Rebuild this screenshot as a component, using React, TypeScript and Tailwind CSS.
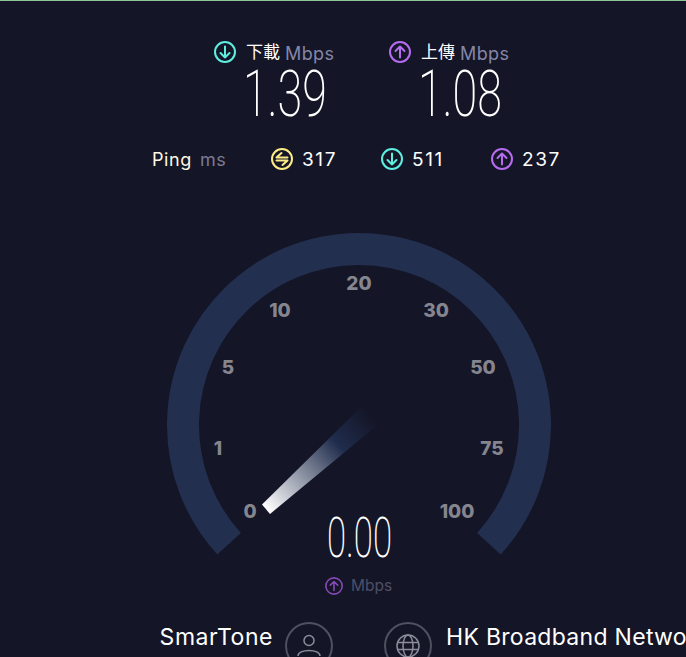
const sans = "font-['Inter','Noto_Sans_CJK_TC',sans-serif]";

function DownIcon({ className }: { className: string }) {
  return (
    <svg viewBox="0 0 22 22" fill="none" stroke="currentColor" strokeWidth="2" strokeLinecap="round" strokeLinejoin="round" className={className}>
      <circle cx="11" cy="11" r="10" />
      <path d="M11 5.500v11M6.500 12l4.500 4.500 4.500-4.500" />
    </svg>
  );
}

function UpIcon({ className }: { className: string }) {
  return (
    <svg viewBox="0 0 22 22" fill="none" stroke="currentColor" strokeWidth="2" strokeLinecap="round" strokeLinejoin="round" className={className}>
      <circle cx="11" cy="11" r="10" />
      <path d="M11 16.500v-11M6.500 10l4.500-4.500 4.500 4.500" />
    </svg>
  );
}

function PingIcon({ className }: { className: string }) {
  return (
    <svg viewBox="0 0 22 22" fill="none" stroke="currentColor" strokeWidth="2" strokeLinecap="round" strokeLinejoin="round" className={className}>
      <circle cx="11" cy="11" r="10" />
      <path d="M16.500 9.500h-11l5-4.500M5.500 12.500h11l-5 4.500" />
    </svg>
  );
}

function BigNumber({ value, className }: { value: string; className: string }) {
  return <span className={`inline-block font-['Roboto',sans-serif] font-extralight text-white origin-center ${className}`}>{value}</span>;
}

function Rate({ icon, label, value }: { icon: React.ReactNode; label: string; value: string }) {
  return (
    <div className="w-[175px]">
      <div className="flex items-center h-[24px]">
        {icon}
        <span className="ml-[10px] text-[17px] mt-[2px] text-white">{label}</span>
        <span className="ml-[5px] text-[18px] tracking-[0.4px] mt-[2px] text-[#8486a8]">Mbps</span>
      </div>
      <div className="w-[142px] h-[56px] mt-[2px] flex items-center justify-center">
        <BigNumber value={value} className="text-[65px] leading-[56px] scale-x-[0.69]" />
      </div>
    </div>
  );
}

function PingValue({ icon, value }: { icon: React.ReactNode; value: string }) {
  return (
    <div className="flex items-center w-[110px]">
      {icon}
      <span className="ml-[9px] mt-[2px] text-[19px] tracking-[1.6px] text-white">{value}</span>
    </div>
  );
}

const ticks = [
  { label: "0", x: 250, y: 511 },
  { label: "1", x: 218, y: 448 },
  { label: "5", x: 228, y: 367 },
  { label: "10", x: 280, y: 310 },
  { label: "20", x: 359, y: 283 },
  { label: "30", x: 436, y: 310 },
  { label: "50", x: 483, y: 367 },
  { label: "75", x: 492, y: 448 },
  { label: "100", x: 457, y: 511 },
];

function Gauge() {
  return (
    <svg width="686" height="360" viewBox="0 200 686 360" className="block">
      <defs>
        <linearGradient id="needle" gradientUnits="userSpaceOnUse" x1="266" y1="509" x2="372" y2="414">
          <stop offset="0" stopColor="#ffffff" />
          <stop offset="0.68" stopColor="#1f2c4c" />
          <stop offset="1" stopColor="#1f2c4c" stopOpacity="0" />
        </linearGradient>
      </defs>
      <path d="M 229.100 543.700 A 176 176 0 1 1 488.900 543.700" fill="none" stroke="#222f4f" strokeWidth="32" />
      <polygon points="262,504.500 270,514 380,423 363,405" fill="url(#needle)" />
      {ticks.map((t) => (
        <text key={t.label} x={t.x} y={t.y} dy="6.500" textAnchor="middle" fill="#85858f" className="text-[19px] font-extrabold">
          {t.label}
        </text>
      ))}
    </svg>
  );
}

export default function App() {
  return (
    <div className={`relative w-full h-[657px] overflow-hidden bg-[#141526] border-t border-[#8fc79a] ${sans}`}>
      <div className="flex pl-[214px] pt-[39px]">
        <Rate icon={<DownIcon className="w-[22px] h-[22px] text-[#5eeee0]" />} label="下載" value="1.39" />
        <Rate icon={<UpIcon className="w-[22px] h-[22px] text-[#b56cf0]" />} label="上傳" value="1.08" />
      </div>
      <div className="flex items-center pl-[152px] mt-[25px] h-[24px]">
        <span className="w-[119px] text-[18px] tracking-[0.6px]">
          <span className="text-[#fff8e0]">Ping</span>
          <span className="ml-[8px] text-[#7c7a92]">ms</span>
        </span>
        <PingValue icon={<PingIcon className="w-[22px] h-[22px] text-[#fdec86]" />} value="317" />
        <PingValue icon={<DownIcon className="w-[22px] h-[22px] text-[#5eeee0]" />} value="511" />
        <PingValue icon={<UpIcon className="w-[22px] h-[22px] text-[#b56cf0]" />} value="237" />
      </div>
      <div className="mt-[29px]">
        <Gauge />
      </div>
      <div className="absolute left-[32px] right-0 top-[507px] flex justify-center">
        <BigNumber value="0.00" className="text-[56px] leading-[60px] scale-x-[0.62]" />
      </div>
      <div className="absolute left-[325px] top-[573px] flex items-center">
        <UpIcon className="w-[18px] h-[18px] text-[#8448b4]" />
        <span className="ml-[8px] text-[15.500px] text-[#4d4f69]">Mbps</span>
      </div>
      <div className="absolute left-0 top-[621px] flex items-start whitespace-nowrap">
        <div className="w-[273px] text-right text-[23px] tracking-[0.55px] leading-[30px] text-white">SmarTone</div>
        <div className="ml-[12px] w-[48px] h-[48px] rounded-full border-2 border-[#4f5060] flex items-center justify-center text-[#8b8c99]">
          <svg viewBox="0 0 24 24" fill="none" stroke="currentColor" strokeWidth="1.500" className="w-[24px] h-[24px]">
            <circle cx="12" cy="6.500" r="5" />
            <path d="M1 22c0-3.500 5-5.500 11-5.500s11 2 11 5.500" />
          </svg>
        </div>
        <div className="ml-[51px] w-[48px] h-[48px] rounded-full border-2 border-[#4f5060] flex items-center justify-center text-[#8b8c99]">
          <svg viewBox="0 0 24 24" fill="none" stroke="currentColor" strokeWidth="1.500" className="w-[24px] h-[24px]">
            <circle cx="12" cy="12" r="11" />
            <ellipse cx="12" cy="12" rx="5" ry="11" />
            <path d="M2 8.500h20M2 15.500h20" />
          </svg>
        </div>
        <div className="ml-[14px] text-[23px] tracking-[0.3px] leading-[30px] text-white">HK Broadband Network</div>
      </div>
    </div>
  );
}
